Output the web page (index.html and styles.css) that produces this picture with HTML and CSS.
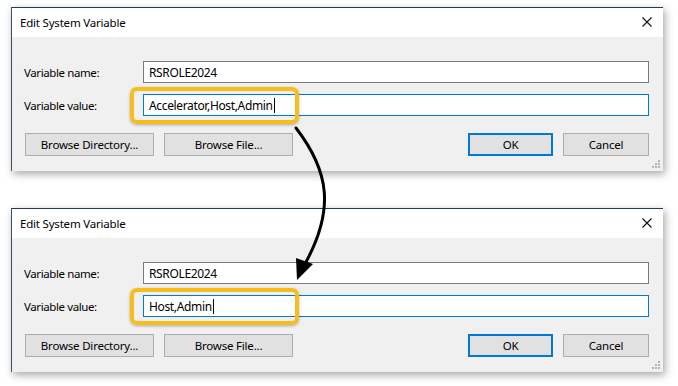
FILE: index.html
```html
<!DOCTYPE html>
<html lang="en">
<head>
<meta charset="utf-8">
<title>Edit System Variable</title>
<link rel="stylesheet" href="styles.css">
</head>
<body>
<main class="page">
  <section class="dialog">
    <header class="titlebar">
      <span class="title">Edit System Variable</span>
      <svg class="close" width="10" height="10" viewBox="0 0 10 10"><path d="M0.5 0.5 L9.5 9.5 M9.5 0.5 L0.5 9.5" stroke="#111" stroke-width="1.1" fill="none"/></svg>
    </header>
    <div class="body">
      <div class="row">
        <label class="label">Variable name:</label>
        <div class="field"><span>RSROLE2024</span></div>
      </div>
      <div class="row">
        <label class="label">Variable value:</label>
        <div class="field focused"><span>Accelerator,Host,Admin</span><span class="caret"></span></div>
      </div>
      <div class="buttons">
        <div class="group">
          <button class="btn wide">Browse Directory...</button>
          <button class="btn wide">Browse File...</button>
        </div>
        <div class="group">
          <button class="btn ok">OK</button>
          <button class="btn cancel">Cancel</button>
        </div>
      </div>
      <span class="grip"></span>
    </div>
    <div class="highlight"></div>
  </section>

  <section class="dialog">
    <header class="titlebar">
      <span class="title">Edit System Variable</span>
      <svg class="close" width="10" height="10" viewBox="0 0 10 10"><path d="M0.5 0.5 L9.5 9.5 M9.5 0.5 L0.5 9.5" stroke="#111" stroke-width="1.1" fill="none"/></svg>
    </header>
    <div class="body">
      <div class="row">
        <label class="label">Variable name:</label>
        <div class="field"><span>RSROLE2024</span></div>
      </div>
      <div class="row">
        <label class="label">Variable value:</label>
        <div class="field focused"><span>Host,Admin</span><span class="caret"></span></div>
      </div>
      <div class="buttons">
        <div class="group">
          <button class="btn wide">Browse Directory...</button>
          <button class="btn wide">Browse File...</button>
        </div>
        <div class="group">
          <button class="btn ok">OK</button>
          <button class="btn cancel">Cancel</button>
        </div>
      </div>
      <span class="grip"></span>
    </div>
    <div class="highlight"></div>
  </section>

  <svg class="arrow" width="678" height="386" viewBox="0 0 678 386">
    <path d="M296 128 C 330 172 334 210 306 262" stroke="#000" stroke-width="3" fill="none" stroke-linecap="round"/>
    <path d="M297 280 L296 258 L313 264 Z" fill="#000"/>
  </svg>
</main>
</body>
</html>
```

FILE: styles.css
```css
* { box-sizing: border-box; }

html, body {
  margin: 0;
  padding: 0;
  background: #ffffff;
}

body {
  font-family: "Noto Sans", "Open Sans", "DejaVu Sans", sans-serif;
  font-size: 11.5px;
  letter-spacing: -0.4px;
  color: #000;
}

.page {
  position: relative;
  width: 678px;
  height: 386px;
  padding: 7px 15px 0 11px;
  display: flex;
  flex-direction: column;
  gap: 37px;
}

.dialog {
  position: relative;
  width: 652px;
  height: 164px;
  border-top: 1px solid #1f3d5e;
  border-left: 1px solid #3a5269;
  box-shadow: 2px 3px 8px rgba(0, 0, 0, 0.35);
  display: flex;
  flex-direction: column;
}

.titlebar {
  height: 29px;
  background: #ffffff;
  display: flex;
  align-items: center;
  justify-content: space-between;
  padding: 0 11px 0 8px;
}

.title {
  letter-spacing: -0.2px;
}

.close {
  display: block;
  margin-top: -1px;
}

.body {
  position: relative;
  flex: 1;
  background: #f0f0f0;
  padding: 24px 14px 0 12px;
  display: flex;
  flex-direction: column;
}

.row {
  display: flex;
  align-items: center;
  height: 22px;
  margin-bottom: 11px;
}

.label {
  width: 119px;
}

.field {
  flex: 1;
  height: 22px;
  background: #fff;
  border: 1px solid #7a7a7a;
  display: flex;
  align-items: center;
  padding-left: 5px;
  font-size: 12px;
  letter-spacing: -0.35px;
}

.field.focused {
  border-color: #0078d7;
}

.caret {
  display: inline-block;
  width: 1px;
  height: 15px;
  background: #000;
  margin-left: 1px;
}

.buttons {
  margin-top: 6px;
  display: flex;
  justify-content: space-between;
  padding-left: 1px;
}

.group {
  display: flex;
  gap: 10px;
}

.btn {
  height: 23px;
  background: #e1e1e1;
  border: 1px solid #adadad;
  font-family: inherit;
  font-size: 11.5px;
  letter-spacing: -0.2px;
  color: #000;
  padding: 0;
}

.btn.wide { width: 129px; }
.btn.ok { width: 85px; border: 2px solid #0078d7; }
.btn.cancel { width: 86px; }

.grip {
  position: absolute;
  right: 3px;
  bottom: 3px;
  width: 8px;
  height: 8px;
  background:
    radial-gradient(circle, #b4b4b4 0 1px, transparent 1px) 6px 0 / 2px 2px no-repeat,
    radial-gradient(circle, #b4b4b4 0 1px, transparent 1px) 3px 3px / 2px 2px no-repeat,
    radial-gradient(circle, #b4b4b4 0 1px, transparent 1px) 6px 3px / 2px 2px no-repeat,
    radial-gradient(circle, #b4b4b4 0 1px, transparent 1px) 0 6px / 2px 2px no-repeat,
    radial-gradient(circle, #b4b4b4 0 1px, transparent 1px) 3px 6px / 2px 2px no-repeat,
    radial-gradient(circle, #b4b4b4 0 1px, transparent 1px) 6px 6px / 2px 2px no-repeat;
}

.highlight {
  position: absolute;
  left: 118px;
  top: 79px;
  width: 169px;
  height: 37px;
  border: 4px solid #f7bd1a;
  border-radius: 7px;
  box-shadow: 0 1px 3px rgba(0, 0, 0, 0.3);
  pointer-events: none;
}

.arrow {
  position: absolute;
  left: 0;
  top: 0;
  pointer-events: none;
}
```
